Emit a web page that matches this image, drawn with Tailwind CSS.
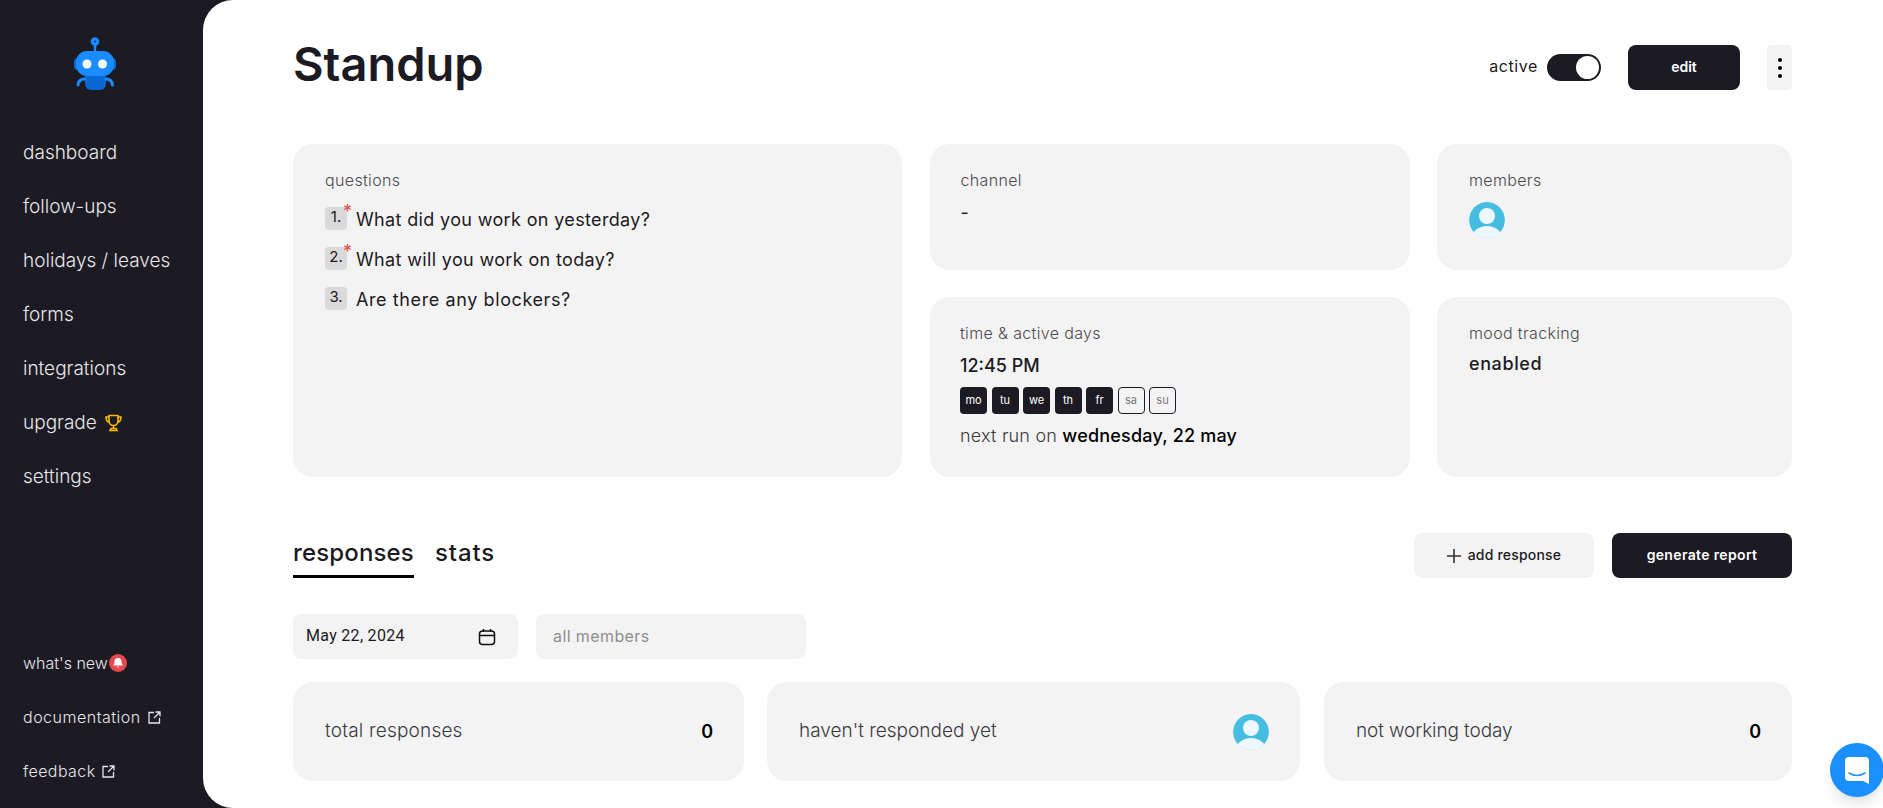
<!DOCTYPE html>
<html lang="en">
<head>
  <meta charset="UTF-8" />
  <title>Standup</title>
  <script src="https://cdn.jsdelivr.net/npm/@tailwindcss/browser@4"></script>
</head>
<body class="bg-[#1c1a23] text-[#1c1a23] font-['Inter',sans-serif] h-[808px] overflow-hidden">
  <div class="flex h-[808px]">

    <!-- sidebar -->
    <aside class="w-[203px] shrink-0 flex flex-col text-[#e6e6e8] pl-[23px]">
      <div class="pt-[36px] pl-[50px] h-[126px]">
        <svg width="44" height="56" viewBox="0 0 44 56">
          <path d="M20.500 8h3l-.6 9h-1.800z" fill="#1a8cff"/>
          <circle cx="22" cy="5.500" r="4.300" fill="#1a8cff"/>
          <circle cx="22" cy="5.500" r="1" fill="#0b3a78"/>
          <rect x="1" y="22" width="8" height="12" rx="4" fill="#0a68d4"/>
          <rect x="35" y="22" width="8" height="12" rx="4" fill="#0a68d4"/>
          <rect x="3" y="15" width="38" height="25" rx="11" fill="#1a8cff"/>
          <circle cx="14" cy="28" r="4.500" fill="#fff"/>
          <circle cx="29.500" cy="28" r="4.500" fill="#fff"/>
          <path d="M12 40h21v8a6 6 0 0 1-6 6H18a6 6 0 0 1-6-6z" fill="#0a68d4"/>
          <path d="M5 49c.5-4 3-6 6.500-6M39.500 49c-.5-4-3-6-6.500-6" fill="none" stroke="#1a8cff" stroke-width="3" stroke-linecap="round"/>
        </svg>
      </div>
      <nav class="flex flex-col text-[19px] font-light">
        <a class="h-[54px] flex items-center">dashboard</a>
        <a class="h-[54px] flex items-center">follow-ups</a>
        <a class="h-[54px] flex items-center">holidays / leaves</a>
        <a class="h-[54px] flex items-center">forms</a>
        <a class="h-[54px] flex items-center">integrations</a>
        <a class="h-[54px] flex items-center gap-[8px]">upgrade
          <svg width="17" height="18" viewBox="0 0 17 18" fill="none" stroke="#fdb900" stroke-width="1.600">
            <path d="M4 1.500h9v5.500a4.500 4.500 0 0 1-9 0zM4 3H1c0 3 1 5 3.500 5.500M13 3h3c0 3-1 5-3.500 5.500M8.500 11.500v3M5 16.500h7l-1-2H6z"/>
          </svg>
        </a>
        <a class="h-[54px] flex items-center">settings</a>
      </nav>
      <div class="mt-auto flex flex-col text-[16px] font-light pb-[10px]">
        <a class="h-[54px] flex items-center gap-[1px]">what's new
          <span class="w-[18px] h-[18px] rounded-full bg-[#e5484d] flex items-center justify-center">
            <svg width="12" height="12" viewBox="0 0 12 12" fill="#fff"><path d="M6 1a3.500 3.500 0 0 0-3.500 3.500c0 2.500-1 3.500-1.500 4h10c-.5-.5-1.500-1.500-1.500-4A3.500 3.500 0 0 0 6 1zM4.800 9.500h2.400L6 11z"/></svg>
          </span>
        </a>
        <a class="h-[54px] flex items-center gap-[7px] tracking-[.5px]">documentation
          <svg width="13" height="13" viewBox="0 0 13 13" fill="none" stroke="#e6e6e8" stroke-width="1.300"><path d="M6 1.500H1v10.500h10.500V7M7.500 1h4.500v4.500M12 1L6 7"/></svg>
        </a>
        <a class="h-[54px] flex items-center gap-[7px] tracking-[.4px]">feedback
          <svg width="13" height="13" viewBox="0 0 13 13" fill="none" stroke="#e6e6e8" stroke-width="1.300"><path d="M6 1.500H1v10.500h10.500V7M7.500 1h4.500v4.500M12 1L6 7"/></svg>
        </a>
      </div>
    </aside>

    <!-- main -->
    <main class="flex-1 bg-white rounded-l-[30px] pl-[90px] pr-[91px]">
      <header class="h-[144px] flex items-start justify-between pt-[45px]">
        <h1 class="text-[47px] leading-[38px] font-semibold">Standup</h1>
        <div class="flex items-center">
          <span class="text-[16px] mr-[9px] mb-[3px] tracking-[.6px]">active</span>
          <span class="w-[54px] h-[27px] rounded-full bg-[#1c1a23] flex items-center justify-end pr-[2px] mr-[27px]">
            <span class="w-[23px] h-[23px] rounded-full bg-white"></span>
          </span>
          <button class="w-[112px] h-[45px] pb-[2px] rounded-[8px] bg-[#1c1a23] text-white text-[14px] font-semibold mr-[27px]">edit</button>
          <button class="w-[25px] h-[45px] rounded-[4px] bg-[#f3f3f3] flex flex-col items-center justify-center gap-[4px]">
            <span class="w-[4px] h-[4px] rounded-full bg-black"></span>
            <span class="w-[4px] h-[4px] rounded-full bg-black"></span>
            <span class="w-[4px] h-[4px] rounded-full bg-black"></span>
          </button>
        </div>
      </header>

      <section class="grid grid-cols-[609px_480px_355px] grid-rows-[126px_180px] gap-x-[27.5px] gap-y-[27px]">
        <div class="row-span-2 bg-[#f3f3f3] rounded-[20px] pl-[32px] pt-[24px]">
          <p class="text-[16px] font-light text-[#4b4a52] leading-[24px] tracking-[.35px]">questions</p>
          <ul class="mt-[15px] flex flex-col gap-[17px] text-[18px] tracking-[.35px]">
            <li class="flex items-start h-[23px]">
              <span class="relative w-[22px] h-[23px] rounded-[4px] bg-[#d9d9d9] text-[15px] leading-[20px] text-center mr-[9px] tracking-normal">1.<span class="absolute -top-[4px] -right-[5px] text-[#e5484d] text-[18px] leading-[18px]">*</span></span>
              <span class="leading-[26px]">What did you work on yesterday?</span>
            </li>
            <li class="flex items-start h-[23px]">
              <span class="relative w-[22px] h-[23px] rounded-[4px] bg-[#d9d9d9] text-[15px] leading-[20px] text-center mr-[9px] tracking-normal">2.<span class="absolute -top-[4px] -right-[5px] text-[#e5484d] text-[18px] leading-[18px]">*</span></span>
              <span class="leading-[26px]">What will you work on today?</span>
            </li>
            <li class="flex items-start h-[23px]">
              <span class="w-[22px] h-[23px] rounded-[4px] bg-[#d9d9d9] text-[15px] leading-[20px] text-center mr-[9px] tracking-normal">3.</span>
              <span class="leading-[26px] tracking-[.6px]">Are there any blockers?</span>
            </li>
          </ul>
        </div>

        <div class="bg-[#f3f3f3] rounded-[20px] pl-[31px] pt-[24px]">
          <p class="text-[16px] font-light text-[#4b4a52] leading-[24px] tracking-[.35px]">channel</p>
          <p class="text-[18px] mt-[7px] leading-[28px]">-</p>
        </div>

        <div class="bg-[#f3f3f3] rounded-[20px] pl-[32px] pt-[24px]">
          <p class="text-[16px] font-light text-[#4b4a52] leading-[24px] tracking-[.35px]">members</p>
          <svg class="mt-[10px]" width="36" height="36" viewBox="0 0 36 36"><use href="#avatar"/></svg>
        </div>

        <div class="bg-[#f3f3f3] rounded-[20px] pl-[30.5px] pt-[24px]">
          <p class="text-[16px] font-light text-[#4b4a52] leading-[24px] tracking-[.35px]">time &amp; active days</p>
          <p class="text-[18px] font-medium mt-[7px] leading-[28px]">12:45 PM</p>
          <div class="flex gap-[4.5px] mt-[7px] text-[11px]">
            <span class="w-[27px] h-[27px] rounded-[4px] bg-[#1c1a23] text-white flex items-center justify-center">mo</span>
            <span class="w-[27px] h-[27px] rounded-[4px] bg-[#1c1a23] text-white flex items-center justify-center">tu</span>
            <span class="w-[27px] h-[27px] rounded-[4px] bg-[#1c1a23] text-white flex items-center justify-center">we</span>
            <span class="w-[27px] h-[27px] rounded-[4px] bg-[#1c1a23] text-white flex items-center justify-center">th</span>
            <span class="w-[27px] h-[27px] rounded-[4px] bg-[#1c1a23] text-white flex items-center justify-center">fr</span>
            <span class="w-[27px] h-[27px] rounded-[4px] border border-[#1c1a23] text-[#77767c] flex items-center justify-center">sa</span>
            <span class="w-[27px] h-[27px] rounded-[4px] border border-[#1c1a23] text-[#77767c] flex items-center justify-center">su</span>
          </div>
          <p class="text-[18px] font-light mt-[8px] leading-[28px] text-[#3a3942] tracking-[.2px]">next run on <span class="font-medium text-black">wednesday, 22 may</span></p>
        </div>

        <div class="bg-[#f3f3f3] rounded-[20px] pl-[32px] pt-[24px]">
          <p class="text-[16px] font-light text-[#4b4a52] leading-[24px] tracking-[.35px]">mood tracking</p>
          <p class="text-[18px] font-medium mt-[5px] leading-[28px] tracking-[.6px]">enabled</p>
        </div>
      </section>

      <section class="flex items-start justify-between mt-[56px]">
        <div class="flex gap-[21px] text-[24px] font-medium">
          <a class="h-[45px] border-b-[3px] border-black leading-[40px] tracking-[.15px]">responses</a>
          <a class="h-[45px] leading-[40px] tracking-[.9px]">stats</a>
        </div>
        <div class="flex gap-[18px]">
          <button class="w-[180px] h-[45px] pb-[2px] rounded-[8px] bg-[#f3f3f3] text-[14px] font-medium flex items-center justify-center gap-[7px] tracking-[.2px]">
            <svg class="mt-[2px]" width="14" height="14" viewBox="0 0 14 14" stroke="#333" stroke-width="1.600"><path d="M7 0v14M0 7h14"/></svg>
            add response
          </button>
          <button class="w-[180px] h-[45px] pb-[2px] rounded-[8px] bg-[#1c1a23] text-white text-[14px] font-semibold tracking-[.35px]">generate report</button>
        </div>
      </section>

      <section class="flex gap-[18px] mt-[36px]">
        <div class="w-[225px] h-[45px] rounded-[8px] bg-[#f3f3f3] flex items-center justify-between pl-[13px] pr-[22px] font-['Roboto',sans-serif] text-[16px] tracking-[.3px]">
          <span class="mb-[2px]">May 22, 2024</span>
          <svg width="18" height="18" viewBox="0 0 18 18" fill="none" stroke="#111" stroke-width="1.500"><rect x="1.500" y="3" width="15" height="13.500" rx="3"/><path d="M1.500 7.500h15M5.500 1v3M12.500 1v3"/></svg>
        </div>
        <div class="w-[270px] h-[45px] pb-[2px] rounded-[8px] bg-[#f3f3f3] flex items-center pl-[17px] text-[16px] text-[#8d8d90] tracking-[.4px]">all members</div>
      </section>

      <section class="grid grid-cols-[451px_533px_469px] gap-x-[23px] mt-[23px]">
        <div class="h-[99px] pb-[1px] rounded-[20px] bg-[#f3f3f3] flex items-center justify-between pl-[32px] pr-[31px]">
          <span class="text-[19px] font-light text-[#3a3942] tracking-[.2px]">total responses</span>
          <span class="text-[18px] font-semibold text-black">0</span>
        </div>
        <div class="h-[99px] rounded-[20px] bg-[#f3f3f3] flex items-center justify-between pl-[32px] pr-[31px]">
          <span class="text-[19px] font-light text-[#3a3942] mb-[1px]">haven't responded yet</span>
          <svg width="36" height="36" viewBox="0 0 36 36"><use href="#avatar"/></svg>
        </div>
        <div class="h-[99px] ml-[1px] pb-[1px] rounded-[20px] bg-[#f3f3f3] flex items-center justify-between pl-[32px] pr-[31px]">
          <span class="text-[19px] font-light text-[#3a3942] tracking-[-.1px]">not working today</span>
          <span class="text-[18px] font-semibold text-black">0</span>
        </div>
      </section>
    </main>
  </div>

  <svg width="0" height="0" class="absolute">
    <defs>
      <clipPath id="avatarClip"><circle cx="18" cy="18" r="18"/></clipPath>
      <g id="avatar" clip-path="url(#avatarClip)">
        <circle cx="18" cy="18" r="18" fill="#45bde0"/>
        <circle cx="18" cy="14" r="8" fill="#ecf8fd"/>
        <ellipse cx="18" cy="36" rx="15" ry="12" fill="#ecf8fd"/>
      </g>
    </defs>
  </svg>

  <!-- chat launcher -->
  <button class="fixed left-[1830px] top-[743px] w-[54px] h-[54px] rounded-full bg-[#1a8fff] shadow-lg flex items-center justify-center">
    <svg width="24" height="27" viewBox="0 0 24 27"><path d="M4 0h16a4 4 0 0 1 4 4v23l-6-3H4a4 4 0 0 1-4-4V4a4 4 0 0 1 4-4z" fill="#fff"/><path d="M4 16c5 3 11 3 16 0" fill="none" stroke="#1a8fff" stroke-width="1.500" stroke-linecap="round"/></svg>
  </button>
</body>
</html>
